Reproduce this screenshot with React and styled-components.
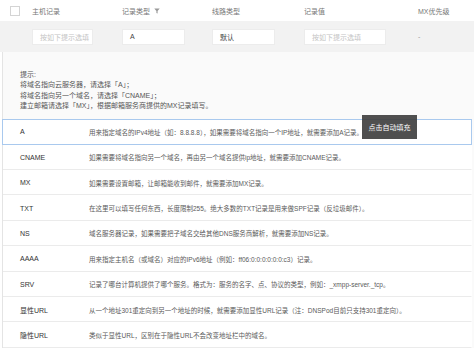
import React from 'react'
import styled, { createGlobalStyle } from 'styled-components'

const GlobalStyle = createGlobalStyle`
  html, body {
    margin: 0;
    padding: 0;
    background: #fff;
    overflow: hidden;
  }
  body {
    font-family: "Liberation Sans", "Noto Sans CJK SC", sans-serif;
    font-size: 7px;
    color: #333;
  }
`

const Page = styled.div`
  width: 474px;
  height: 348px;
  overflow: hidden;
  background: #fff;
`

const GridRow = styled.div`
  display: grid;
  grid-template-columns: 32px 90px 90px 92px 114px 1fr;
  align-items: center;
  height: ${p => p.$h}px;
  background: ${p => p.$bg || '#fff'};
`

const HeadCell = styled.div`
  color: #777;
  display: flex;
  align-items: center;
  gap: 4px;
`

const CheckCell = styled.div`
  padding-left: 10px;
`

const Checkbox = styled.div`
  width: 8px;
  height: 8px;
  border: 1px solid #d4d4d4;
  background: #fff;
`

const Input = styled.div`
  box-sizing: border-box;
  width: ${p => p.$w}px;
  height: 16px;
  background: #fff;
  border: 1px solid #ececec;
  padding-left: 7px;
  display: flex;
  align-items: center;
  color: ${p => (p.$placeholder ? '#c4c4c4' : '#444')};
`

const Dash = styled.div`
  color: #999;
`

const Panel = styled.div`
  margin-left: 2px;
  border-left: 1px solid #e4e4e4;
  background: #fafafa;
  padding-top: 18px;
`

const Tips = styled.div`
  padding-left: 17px;
  line-height: 10.3px;
  color: #555;
  margin-bottom: 8px;
`

const List = styled.div`
  margin-right: 2px;
`

const Row = styled.div`
  position: relative;
  display: grid;
  grid-template-columns: 69px 1fr;
  align-items: center;
  box-sizing: border-box;
  height: 25.4px;
  padding-left: 17px;
  background: #fff;
  border: 1px solid ${p => (p.$active ? '#a9c9ee' : 'transparent')};
  border-bottom: 1px solid ${p => (p.$active ? '#a9c9ee' : '#ebebeb')};
  border-left-width: ${p => (p.$active ? '1px' : '0')};
  margin-left: ${p => (p.$active ? '-1px' : '0')};
`

const Type = styled.div`
  color: #333;
`

const Desc = styled.div`
  color: #5a5a5a;
  font-size: 6.5px;
  white-space: nowrap;
`

const Tooltip = styled.div`
  position: absolute;
  left: 359px;
  top: -5px;
  width: 55px;
  height: 24px;
  background: rgba(64, 64, 64, 0.92);
  color: #fff;
  display: flex;
  align-items: center;
  justify-content: center;
`

const FilterIcon = () => (
  <svg width="6" height="6" viewBox="0 0 6 6">
    <path d="M0.3 0.6h5.4L3.6 3v2.6l-1.2-0.6V3z" fill="#999" />
  </svg>
)

const records = [
  ['A', '用来指定域名的IPv4地址（如：8.8.8.8），如果需要将域名指向一个IP地址，就需要添加A记录。'],
  ['CNAME', '如果需要将域名指向另一个域名，再由另一个域名提供ip地址，就需要添加CNAME记录。'],
  ['MX', '如果需要设置邮箱，让邮箱能收到邮件，就需要添加MX记录。'],
  ['TXT', '在这里可以填写任何东西，长度限制255。绝大多数的TXT记录是用来做SPF记录（反垃圾邮件）。'],
  ['NS', '域名服务器记录，如果需要把子域名交给其他DNS服务商解析，就需要添加NS记录。'],
  ['AAAA', '用来指定主机名（或域名）对应的IPv6地址（例如：ff06:0:0:0:0:0:0:c3）记录。'],
  ['SRV', '记录了哪台计算机提供了哪个服务。格式为：服务的名字、点、协议的类型，例如：_xmpp-server._tcp。'],
  ['显性URL', '从一个地址301重定向到另一个地址的时候，就需要添加显性URL记录（注：DNSPod目前只支持301重定向）。'],
  ['隐性URL', '类似于显性URL，区别在于隐性URL不会改变地址栏中的域名。'],
]

export default function App() {
  return (
    <Page>
      <GlobalStyle />
      <GridRow $h={21}>
        <CheckCell><Checkbox /></CheckCell>
        <HeadCell>主机记录</HeadCell>
        <HeadCell>记录类型 <FilterIcon /></HeadCell>
        <HeadCell>线路类型</HeadCell>
        <HeadCell>记录值</HeadCell>
        <HeadCell>MX优先级</HeadCell>
      </GridRow>
      <GridRow $h={31} $bg="#f2f2f2">
        <div />
        <Input $w={61} $placeholder>按如下提示选填</Input>
        <Input $w={63}>A</Input>
        <Input $w={63}>默认</Input>
        <Input $w={82} $placeholder>按如下提示选填</Input>
        <Dash>-</Dash>
      </GridRow>
      <Panel>
        <Tips>
          <div>提示:</div>
          <div>将域名指向云服务器，请选择「A」；</div>
          <div>将域名指向另一个域名，请选择「CNAME」；</div>
          <div>建立邮箱请选择「MX」，根据邮箱服务商提供的MX记录填写。</div>
        </Tips>
        <List>
          {records.map(([type, desc], i) => (
            <Row key={type} $active={i === 0}>
              <Type>{type}</Type>
              <Desc>{desc}</Desc>
              {i === 0 && <Tooltip>点击自动填充</Tooltip>}
            </Row>
          ))}
        </List>
      </Panel>
    </Page>
  )
}
